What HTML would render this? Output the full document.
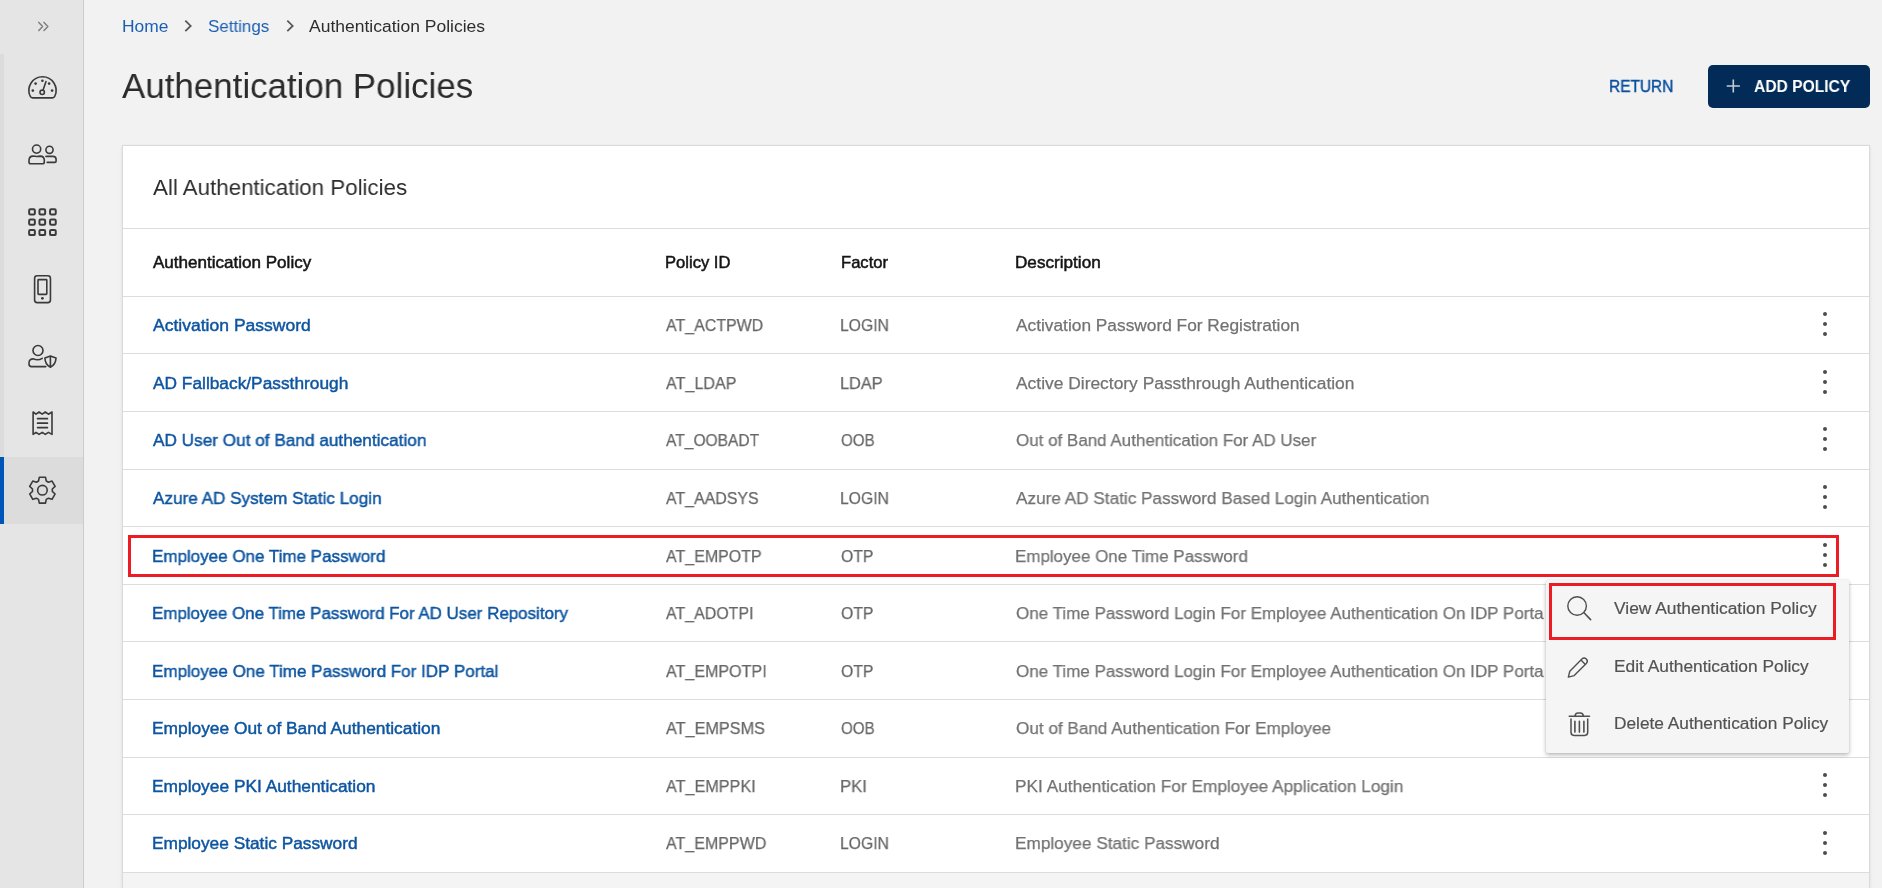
<!DOCTYPE html>
<html><head><meta charset="utf-8">
<style>
*{box-sizing:border-box;margin:0;padding:0}
html,body{width:1882px;height:888px;overflow:hidden;background:#f2f2f2;font-family:"Liberation Sans",sans-serif}
.t{position:absolute;white-space:nowrap;line-height:1;will-change:transform}
.md{-webkit-text-stroke:0.45px currentColor}
.bc{color:#1b5fb3}
.lk{color:#0d55a0}
.pid{color:#676767;-webkit-text-stroke:0.25px #676767}
.desc{color:#727272;-webkit-text-stroke:0.25px #727272}
.hd{color:#141414;-webkit-text-stroke:0.5px #141414}
.hl{position:absolute;left:123px;width:1746px;height:1px;background:#dcdcdc}
.dot{position:absolute;width:4px;height:4px;border-radius:50%;background:#4d4d4d}
</style></head><body>

<div style="position:absolute;left:0;top:0;width:83px;height:888px;background:#e5e5e5"></div>
<div style="position:absolute;left:83px;top:0;width:1px;height:888px;background:#cbcbcb"></div>
<div style="position:absolute;left:0;top:54px;width:4px;height:403px;background:#dcdcdc"></div>
<div style="position:absolute;left:0;top:457px;width:83px;height:67px;background:#dcdcdc"></div>
<div style="position:absolute;left:0;top:457px;width:4px;height:67px;background:#0055b8"></div>
<svg style="position:absolute;left:0;top:0" width="84" height="540" viewBox="0 0 84 540" fill="none" stroke="#3a3a3a" stroke-width="1.6" stroke-linecap="round" stroke-linejoin="round">
<path d="M38.8 22.4 L42.6 26.4 L38.8 30.4 M44 22.4 L47.9 26.4 L44 30.4" stroke="#7f7f7f" stroke-width="1.5"/>
<path d="M30.1 96 A13.6 13.6 0 1 1 54.9 96 Q54.2 97.9 52.4 97.9 H32.6 Q30.8 97.9 30.1 96 Z"/>
<circle cx="42.2" cy="92.3" r="2.2"/>
<path d="M43 90.2 L46 81.6"/>
<g fill="#3a3a3a" stroke="none"><circle cx="42.4" cy="80.8" r="1.3"/><circle cx="35.6" cy="83.6" r="1.3"/><circle cx="49.1" cy="83.6" r="1.3"/><circle cx="32.8" cy="90.6" r="1.3"/><circle cx="52.1" cy="90.6" r="1.3"/></g>
<circle cx="36.6" cy="149.1" r="4.1"/>
<path d="M30.8 163.8 H42.5 Q44.3 163.8 44.3 162 V160.4 Q44.3 156.2 40.2 156.1 Q36.6 157 33.1 156.1 Q29 156.2 29 160.4 V162 Q29 163.8 30.8 163.8 Z"/>
<circle cx="49.5" cy="149.8" r="3.6"/>
<path d="M46 156.4 H52.9 Q56.1 156.4 56.1 159.6 V161 Q56.1 162.4 54.8 162.4 H47.2"/>
<rect x="29.15" y="209.20" width="5.7" height="5.2" rx="1.2" stroke-width="2"/>
<rect x="29.15" y="219.60" width="5.7" height="5.2" rx="1.2" stroke-width="2"/>
<rect x="29.15" y="229.90" width="5.7" height="5.2" rx="1.2" stroke-width="2"/>
<rect x="39.45" y="209.20" width="5.7" height="5.2" rx="1.2" stroke-width="2"/>
<rect x="39.45" y="219.60" width="5.7" height="5.2" rx="1.2" stroke-width="2"/>
<rect x="39.45" y="229.90" width="5.7" height="5.2" rx="1.2" stroke-width="2"/>
<rect x="50.05" y="209.20" width="5.7" height="5.2" rx="1.2" stroke-width="2"/>
<rect x="50.05" y="219.60" width="5.7" height="5.2" rx="1.2" stroke-width="2"/>
<rect x="50.05" y="229.90" width="5.7" height="5.2" rx="1.2" stroke-width="2"/>
<rect x="34.6" y="275.8" width="15.85" height="26.8" rx="2.6"/>
<rect x="38.0" y="279.6" width="8.8" height="14.8" rx="0.6"/>
<circle cx="42.4" cy="298.3" r="1.4" fill="#3a3a3a" stroke="none"/>
<circle cx="38" cy="350.5" r="5.0"/>
<path d="M42.2 358.3 Q40.2 359.7 37.2 359.7 Q35.2 359.7 33.6 358.9 Q29 358.8 29 363.2 V364 Q29 366.6 31.6 366.6 H45.8"/>
<path d="M50.4 356.1 L44.9 358.1 Q45.2 364.6 50.4 367.2 Q55.7 364.6 56 358.1 Z M50.4 356.1 V367.2"/>
<path d="M33.1 412 L36 414.2 L39.1 412 L42.2 414.2 L45.3 412 L48.4 414.2 L52 412 V434.4 L48.4 432.4 L45.3 434.4 L42.2 432.4 L39.1 434.4 L36 432.4 L33.1 434.4 Z"/>
<path d="M37.6 418.7 H47.4 M37.6 423.2 H47.4 M37.6 427.6 H47.4" stroke-width="1.7"/>
<path d="M38.50 481.00 L39.30 477.30 L45.50 477.30 L46.30 481.00 L48.42 482.22 L52.02 481.07 L55.12 486.43 L52.32 488.98 L52.32 491.42 L55.12 493.97 L52.02 499.33 L48.42 498.18 L46.30 499.40 L45.50 503.10 L39.30 503.10 L38.50 499.40 L36.38 498.18 L32.78 499.33 L29.68 493.97 L32.48 491.42 L32.48 488.98 L29.68 486.43 L32.78 481.07 L36.38 482.22 Z"/>
<circle cx="42.4" cy="490.2" r="4.8"/>
</svg>
<div class="t bc" style="left:122.29px;top:18.16px;font-size:17.3px;transform:scaleX(1.0070);transform-origin:0 0;">Home</div>
<div class="t bc" style="left:207.70px;top:18.16px;font-size:17.3px;transform:scaleX(0.9809);transform-origin:0 0;">Settings</div>
<div class="t " style="left:309.00px;top:18.16px;font-size:17.3px;transform:scaleX(1.0124);transform-origin:0 0;color:#2d2d2d">Authentication Policies</div>
<svg style="position:absolute;left:180px;top:16px" width="16" height="20" viewBox="0 0 16 20" fill="none"><path d="M5.3 4.6 L10.7 9.9 L5.3 15.2" stroke="#585858" stroke-width="1.8"/></svg>
<svg style="position:absolute;left:281.5px;top:16px" width="16" height="20" viewBox="0 0 16 20" fill="none"><path d="M5.3 4.6 L10.7 9.9 L5.3 15.2" stroke="#585858" stroke-width="1.8"/></svg>
<div class="t " style="left:122.40px;top:68.75px;font-size:35.5px;transform:scaleX(0.9831);transform-origin:0 0;color:#2b2b2b">Authentication Policies</div>
<div class="t md" style="left:1608.90px;top:78.24px;font-size:17.2px;transform:scaleX(0.8974);transform-origin:0 0;color:#0b4f9f">RETURN</div>
<div style="position:absolute;left:1708px;top:65px;width:162px;height:43px;background:#022c57;border-radius:5px"></div>
<svg style="position:absolute;left:1723px;top:76px" width="20" height="20" viewBox="0 0 20 20"><path d="M10.3 3.4 V16.6 M3.7 10 H16.9" stroke="#c3cbd6" stroke-width="1.6"/></svg>
<div class="t " style="left:1753.50px;top:78.44px;font-size:17.2px;transform:scaleX(0.9087);transform-origin:0 0;color:#fff;font-weight:bold">ADD POLICY</div>
<div style="position:absolute;left:122px;top:145px;width:1748px;height:800px;background:#fff;border:1px solid #dadada;box-shadow:0 1px 3px rgba(0,0,0,.10)"></div>
<div class="t " style="left:153.20px;top:176.74px;font-size:22.4px;transform:scaleX(0.9961);transform-origin:0 0;color:#2d2d2d">All Authentication Policies</div>
<div class="hl" style="top:228px"></div>
<div class="hl" style="top:296px"></div>
<div class="t hd md" style="left:152.50px;top:254.75px;font-size:16.6px;transform:scaleX(1.0271);transform-origin:0 0;">Authentication Policy</div>
<div class="t hd md" style="left:665.30px;top:254.75px;font-size:16.6px;transform:scaleX(0.9964);transform-origin:0 0;">Policy ID</div>
<div class="t hd md" style="left:840.51px;top:254.75px;font-size:16.6px;transform:scaleX(0.9904);transform-origin:0 0;">Factor</div>
<div class="t hd md" style="left:1014.77px;top:254.75px;font-size:16.6px;transform:scaleX(1.0326);transform-origin:0 0;">Description</div>
<div class="t lk md" style="left:152.70px;top:317.06px;font-size:17.3px;transform:scaleX(1.0146);transform-origin:0 0;">Activation Password</div>
<div class="t pid" style="left:666.30px;top:317.06px;font-size:17.3px;transform:scaleX(0.9236);transform-origin:0 0;">AT_ACTPWD</div>
<div class="t pid" style="left:840.09px;top:317.06px;font-size:17.3px;transform:scaleX(0.9102);transform-origin:0 0;">LOGIN</div>
<div class="t desc" style="left:1015.70px;top:317.06px;font-size:17.3px;transform:scaleX(1.0013);transform-origin:0 0;">Activation Password For Registration</div>
<div class="dot" style="left:1823.3px;top:312.20px"></div>
<div class="dot" style="left:1823.3px;top:322.20px"></div>
<div class="dot" style="left:1823.3px;top:332.20px"></div>
<div class="hl" style="top:353px"></div>
<div class="t lk md" style="left:152.70px;top:374.66px;font-size:17.3px;transform:scaleX(1.0014);transform-origin:0 0;">AD Fallback/Passthrough</div>
<div class="t pid" style="left:666.30px;top:374.66px;font-size:17.3px;transform:scaleX(0.9330);transform-origin:0 0;">AT_LDAP</div>
<div class="t pid" style="left:840.05px;top:374.66px;font-size:17.3px;transform:scaleX(0.9469);transform-origin:0 0;">LDAP</div>
<div class="t desc" style="left:1015.70px;top:374.66px;font-size:17.3px;transform:scaleX(1.0067);transform-origin:0 0;">Active Directory Passthrough Authentication</div>
<div class="dot" style="left:1823.3px;top:369.80px"></div>
<div class="dot" style="left:1823.3px;top:379.80px"></div>
<div class="dot" style="left:1823.3px;top:389.80px"></div>
<div class="hl" style="top:411px"></div>
<div class="t lk md" style="left:152.70px;top:432.26px;font-size:17.3px;transform:scaleX(0.9950);transform-origin:0 0;">AD User Out of Band authentication</div>
<div class="t pid" style="left:666.30px;top:432.26px;font-size:17.3px;transform:scaleX(0.9015);transform-origin:0 0;">AT_OOBADT</div>
<div class="t pid" style="left:841.00px;top:432.26px;font-size:17.3px;transform:scaleX(0.8737);transform-origin:0 0;">OOB</div>
<div class="t desc" style="left:1015.70px;top:432.26px;font-size:17.3px;transform:scaleX(0.9827);transform-origin:0 0;">Out of Band Authentication For AD User</div>
<div class="dot" style="left:1823.3px;top:427.40px"></div>
<div class="dot" style="left:1823.3px;top:437.40px"></div>
<div class="dot" style="left:1823.3px;top:447.40px"></div>
<div class="hl" style="top:469px"></div>
<div class="t lk md" style="left:152.70px;top:489.86px;font-size:17.3px;transform:scaleX(0.9917);transform-origin:0 0;">Azure AD System Static Login</div>
<div class="t pid" style="left:666.30px;top:489.86px;font-size:17.3px;transform:scaleX(0.9210);transform-origin:0 0;">AT_AADSYS</div>
<div class="t pid" style="left:840.09px;top:489.86px;font-size:17.3px;transform:scaleX(0.9102);transform-origin:0 0;">LOGIN</div>
<div class="t desc" style="left:1015.70px;top:489.86px;font-size:17.3px;transform:scaleX(0.9941);transform-origin:0 0;">Azure AD Static Password Based Login Authentication</div>
<div class="dot" style="left:1823.3px;top:485.00px"></div>
<div class="dot" style="left:1823.3px;top:495.00px"></div>
<div class="dot" style="left:1823.3px;top:505.00px"></div>
<div class="hl" style="top:526px"></div>
<div class="t lk md" style="left:151.72px;top:548.36px;font-size:17.3px;transform:scaleX(0.9836);transform-origin:0 0;">Employee One Time Password</div>
<div class="t pid" style="left:666.30px;top:548.36px;font-size:17.3px;transform:scaleX(0.9256);transform-origin:0 0;">AT_EMPOTP</div>
<div class="t pid" style="left:841.00px;top:548.36px;font-size:17.3px;transform:scaleX(0.9115);transform-origin:0 0;">OTP</div>
<div class="t desc" style="left:1014.72px;top:548.36px;font-size:17.3px;transform:scaleX(0.9812);transform-origin:0 0;">Employee One Time Password</div>
<div class="dot" style="left:1823.3px;top:542.60px"></div>
<div class="dot" style="left:1823.3px;top:552.60px"></div>
<div class="dot" style="left:1823.3px;top:562.60px"></div>
<div class="hl" style="top:584px"></div>
<div class="t lk md" style="left:151.72px;top:605.06px;font-size:17.3px;transform:scaleX(0.9801);transform-origin:0 0;">Employee One Time Password For AD User Repository</div>
<div class="t pid" style="left:666.30px;top:605.06px;font-size:17.3px;transform:scaleX(0.9229);transform-origin:0 0;">AT_ADOTPI</div>
<div class="t pid" style="left:841.00px;top:605.06px;font-size:17.3px;transform:scaleX(0.9115);transform-origin:0 0;">OTP</div>
<div class="t desc" style="left:1015.70px;top:605.06px;font-size:17.3px;transform:scaleX(0.985);transform-origin:0 0;">One Time Password Login For Employee Authentication On IDP Portal</div>
<div class="hl" style="top:641px"></div>
<div class="t lk md" style="left:151.71px;top:662.66px;font-size:17.3px;transform:scaleX(0.9865);transform-origin:0 0;">Employee One Time Password For IDP Portal</div>
<div class="t pid" style="left:666.30px;top:662.66px;font-size:17.3px;transform:scaleX(0.9303);transform-origin:0 0;">AT_EMPOTPI</div>
<div class="t pid" style="left:841.00px;top:662.66px;font-size:17.3px;transform:scaleX(0.9115);transform-origin:0 0;">OTP</div>
<div class="t desc" style="left:1015.70px;top:662.66px;font-size:17.3px;transform:scaleX(0.985);transform-origin:0 0;">One Time Password Login For Employee Authentication On IDP Portal</div>
<div class="hl" style="top:699px"></div>
<div class="t lk md" style="left:151.70px;top:720.26px;font-size:17.3px;transform:scaleX(1.0040);transform-origin:0 0;">Employee Out of Band Authentication</div>
<div class="t pid" style="left:666.30px;top:720.26px;font-size:17.3px;transform:scaleX(0.9391);transform-origin:0 0;">AT_EMPSMS</div>
<div class="t pid" style="left:841.00px;top:720.26px;font-size:17.3px;transform:scaleX(0.8737);transform-origin:0 0;">OOB</div>
<div class="t desc" style="left:1015.70px;top:720.26px;font-size:17.3px;transform:scaleX(0.9912);transform-origin:0 0;">Out of Band Authentication For Employee</div>
<div class="hl" style="top:757px"></div>
<div class="t lk md" style="left:151.70px;top:777.86px;font-size:17.3px;transform:scaleX(1.0028);transform-origin:0 0;">Employee PKI Authentication</div>
<div class="t pid" style="left:666.30px;top:777.86px;font-size:17.3px;transform:scaleX(0.9367);transform-origin:0 0;">AT_EMPPKI</div>
<div class="t pid" style="left:840.03px;top:777.86px;font-size:17.3px;transform:scaleX(0.9673);transform-origin:0 0;">PKI</div>
<div class="t desc" style="left:1014.70px;top:777.86px;font-size:17.3px;transform:scaleX(0.9983);transform-origin:0 0;">PKI Authentication For Employee Application Login</div>
<div class="dot" style="left:1823.3px;top:773.00px"></div>
<div class="dot" style="left:1823.3px;top:783.00px"></div>
<div class="dot" style="left:1823.3px;top:793.00px"></div>
<div class="hl" style="top:814px"></div>
<div class="t lk md" style="left:151.70px;top:835.46px;font-size:17.3px;transform:scaleX(0.9976);transform-origin:0 0;">Employee Static Password</div>
<div class="t pid" style="left:666.30px;top:835.46px;font-size:17.3px;transform:scaleX(0.9276);transform-origin:0 0;">AT_EMPPWD</div>
<div class="t pid" style="left:840.09px;top:835.46px;font-size:17.3px;transform:scaleX(0.9102);transform-origin:0 0;">LOGIN</div>
<div class="t desc" style="left:1014.71px;top:835.46px;font-size:17.3px;transform:scaleX(0.9949);transform-origin:0 0;">Employee Static Password</div>
<div class="dot" style="left:1823.3px;top:830.60px"></div>
<div class="dot" style="left:1823.3px;top:840.60px"></div>
<div class="dot" style="left:1823.3px;top:850.60px"></div>
<div class="hl" style="top:872px"></div>
<div style="position:absolute;left:123px;top:873px;width:1746px;height:20px;background:#f4f4f4"></div>
<div style="position:absolute;left:1544px;top:595px;width:4px;height:40px;background:#fff"></div>
<div style="position:absolute;left:1544px;top:650px;width:4px;height:40px;background:#fff"></div>
<div style="position:absolute;left:128px;top:535px;width:1711px;height:42px;border:3px solid #ec1c24"></div>
<div style="position:absolute;left:1546px;top:580.4px;width:303px;height:172.8px;background:#f5f5f5;border-radius:2px;box-shadow:0 2px 4px rgba(0,0,0,.28),0 0 2px rgba(0,0,0,.10)"></div>
<svg style="position:absolute;left:1546px;top:580px" width="303" height="173" viewBox="1546 580 303 173" fill="none" stroke="#4f4f4f" stroke-width="1.4" stroke-linecap="round" stroke-linejoin="round">
<circle cx="1577.1" cy="606" r="9.3"/>
<path d="M1584 612.8 L1590.6 619.6" stroke-width="1.6"/>
<g transform="translate(1567.9 677.5) rotate(45)">
<path d="M0 -0.6 L-3.1 -5.8 V-22.9 A3.1 3.1 0 0 1 3.1 -22.9 V-5.8 Z M-3.1 -21.6 H3.1"/>
</g>
<path d="M1569.2 716.3 H1589.5 M1574.9 716 Q1575.6 713.1 1578 713.1 H1580.4 Q1582.8 713.1 1583.5 716" stroke-width="1.5"/>
<path d="M1571 719 V732.3 Q1571 735.4 1574.1 735.4 H1584.6 Q1587.7 735.4 1587.7 732.3 V719" stroke-width="1.5"/>
<path d="M1574.9 721.3 V732.1 M1579.4 721.3 V732.1 M1583.9 721.3 V732.1" stroke-width="1.6"/>
</svg>
<div class="t " style="left:1613.50px;top:600.16px;font-size:17.3px;transform:scaleX(1.0058);transform-origin:0 0;color:#525252;-webkit-text-stroke:0.2px #525252">View Authentication Policy</div>
<div class="t " style="left:1613.70px;top:657.66px;font-size:17.3px;transform:scaleX(1.0033);transform-origin:0 0;color:#525252;-webkit-text-stroke:0.2px #525252">Edit Authentication Policy</div>
<div class="t " style="left:1613.70px;top:715.16px;font-size:17.3px;transform:scaleX(0.9998);transform-origin:0 0;color:#525252;-webkit-text-stroke:0.2px #525252">Delete Authentication Policy</div>
<div style="position:absolute;left:1549px;top:583px;width:287px;height:57px;border:3px solid #ec1c24"></div>
</body></html>
